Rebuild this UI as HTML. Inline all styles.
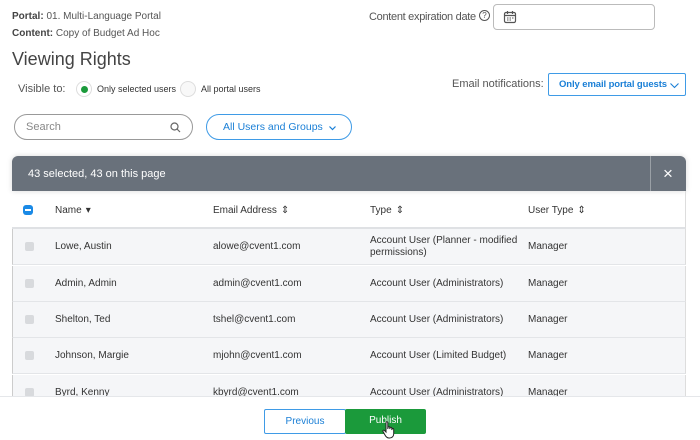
<!DOCTYPE html>
<html><head><style>
*{box-sizing:border-box;margin:0;padding:0}
body{width:700px;height:440px;overflow:hidden;background:#fff;font-family:"Liberation Sans",sans-serif;color:#333;position:relative}
.a{position:absolute;white-space:nowrap}
.sm{font-size:10px;color:#555}
.sm b{font-weight:bold;color:#444}
.row{position:absolute;left:12px;width:674px;height:36px;background:#f5f6f8;border-bottom:1px solid #e3e5e8;border-left:1px solid #ccc;border-right:1px solid #ddd;font-size:10px;color:#333}
.row span{position:absolute;white-space:nowrap}
.cb{position:absolute;left:12px;top:13px;width:9px;height:9px;border-radius:2px;background:#d8dadd}
.hd span{position:absolute;font-size:10px;color:#333;white-space:nowrap}
.srt{font-size:9px;color:#777;margin-left:4px}
</style></head><body>
<div class="a sm" style="left:12px;top:11px"><b>Portal:</b> 01. Multi-Language Portal</div>
<div class="a sm" style="left:12px;top:28px"><b>Content:</b> Copy of Budget Ad Hoc</div>
<div class="a" style="left:12px;top:49px;font-size:18px;color:#444">Viewing Rights</div>
<div class="a" style="left:18px;top:83px;font-size:11px;color:#555">Visible to:</div>
<div class="a" style="left:76px;top:81px;width:16px;height:16px;border-radius:50%;border:1px solid #ddd;background:#fff"><div style="position:absolute;left:4px;top:4px;width:7px;height:7px;border-radius:50%;background:#1b9a3b"></div></div>
<div class="a" style="left:97px;top:84px;font-size:9px;color:#333">Only selected users</div>
<div class="a" style="left:180px;top:81px;width:16px;height:16px;border-radius:50%;border:1px solid #ddd;background:#f8f8f8"></div>
<div class="a" style="left:201px;top:84px;font-size:9px;color:#333">All portal users</div>
<div class="a" style="left:369px;top:11px;font-size:11px;color:#555;letter-spacing:-0.3px">Content expiration date</div>
<div class="a" style="left:479px;top:10px;width:11px;height:11px;border:1px solid #555;border-radius:50%;font-size:8px;line-height:9px;text-align:center;color:#555">?</div>
<div class="a" style="left:493px;top:4px;width:162px;height:26px;border:1px solid #bbb;border-radius:4px">
<svg class="a" style="left:9px;top:5px" width="14" height="14" viewBox="0 0 14 14" fill="none" stroke="#555" stroke-width="1.2"><rect x="1.5" y="2.5" width="11" height="10" rx="1.5"/><path d="M1.5 5.5h11M4.5 1v3M9.5 1v3"/><path d="M4 8h1.5M6.5 8h1.5M9 8h1.5M4 10h1.5M6.5 10h1.5" stroke-width="1"/></svg></div>
<div class="a" style="left:452px;top:78px;font-size:11px;color:#555">Email notifications:</div>
<div class="a" style="left:548px;top:73px;width:138px;height:23px;border:1px solid #3f9be6;border-radius:2px;font-size:9.5px;font-weight:bold;color:#1a7fd6;padding:5px 0 0 10px;letter-spacing:-0.1px">Only email portal guests
<svg class="a" style="left:121px;top:9px" width="9" height="6" viewBox="0 0 9 6" fill="none" stroke="#1a7fd6" stroke-width="1.1"><path d="M.5 .5l4 4 4-4"/></svg></div>
<div class="a" style="left:14px;top:114px;width:179px;height:26px;border:1px solid #999;border-radius:13px;font-size:11px;color:#888;padding:6px 0 0 11px">Search
<svg class="a" style="left:155px;top:7px" width="11" height="11" viewBox="0 0 11 11" fill="none" stroke="#666" stroke-width="1.2"><circle cx="4.5" cy="4.5" r="3.5"/><path d="M7 7l3 3"/></svg></div>
<div class="a" style="left:206px;top:114px;width:146px;height:26px;border:1px solid #3f9be6;border-radius:13px;font-size:10.5px;color:#1a7fd6;padding:6px 0 0 16px">All Users and Groups
<svg class="a" style="left:122px;top:11px" width="7" height="5" viewBox="0 0 7 5" fill="none" stroke="#1a7fd6" stroke-width="1.2"><path d="M.5 .5l3 3 3-3"/></svg></div>
<div class="a" style="left:12px;top:156px;width:674px;height:35px;background:#69717b;border-radius:6px 6px 0 0;box-shadow:0 0 6px rgba(0,0,0,.15);color:#fff;font-size:11px;padding:12px 0 0 16px">43 selected, 43 on this page
<div class="a" style="left:638px;top:0;width:1px;height:35px;background:#9aa0a6"></div>
<div class="a" style="left:651px;top:8px;font-size:17px">&#215;</div></div>
<div class="a hd" style="left:12px;top:191px;width:674px;height:38px;border-bottom:2px solid #dfe1e4;border-right:1px solid #ddd">
<div class="a" style="left:11px;top:14px;width:10px;height:10px;border-radius:3px;background:#1a8ae6"><div style="position:absolute;left:2px;top:4px;width:6px;height:2px;background:#fff"></div></div>
<span style="left:43px;top:14px">Name<span class="srt">&#9662;</span></span>
<span style="left:201px;top:14px">Email Address<span class="srt">&#8661;</span></span>
<span style="left:358px;top:14px">Type<span class="srt">&#8661;</span></span>
<span style="left:516px;top:14px">User Type<span class="srt">&#8661;</span></span></div>
<div class="row" style="top:229px"><div class="cb"></div><span style="left:42px;top:12px">Lowe, Austin</span><span style="left:200px;top:12px">alowe@cvent1.com</span><span style="left:357px;top:6px;line-height:12px">Account User (Planner - modified<br>permissions)</span><span style="left:515px;top:12px">Manager</span></div>
<div class="row" style="top:266px"><div class="cb"></div><span style="left:42px;top:12px">Admin, Admin</span><span style="left:200px;top:12px">admin@cvent1.com</span><span style="left:357px;top:12px">Account User (Administrators)</span><span style="left:515px;top:12px">Manager</span></div>
<div class="row" style="top:302px"><div class="cb"></div><span style="left:42px;top:12px">Shelton, Ted</span><span style="left:200px;top:12px">tshel@cvent1.com</span><span style="left:357px;top:12px">Account User (Administrators)</span><span style="left:515px;top:12px">Manager</span></div>
<div class="row" style="top:338px"><div class="cb"></div><span style="left:42px;top:12px">Johnson, Margie</span><span style="left:200px;top:12px">mjohn@cvent1.com</span><span style="left:357px;top:12px">Account User (Limited Budget)</span><span style="left:515px;top:12px">Manager</span></div>
<div class="row" style="top:375px"><div class="cb"></div><span style="left:42px;top:12px">Byrd, Kenny</span><span style="left:200px;top:12px">kbyrd@cvent1.com</span><span style="left:357px;top:12px">Account User (Administrators)</span><span style="left:515px;top:12px">Manager</span></div>
<div class="a" style="left:0;top:396px;width:700px;height:44px;background:#fff;border-top:1px solid #e5e7ea"></div>
<div class="a" style="left:264px;top:409px;width:82px;height:25px;border:1px solid #3f9be6;border-radius:2px;font-size:10px;color:#1a7fd6;text-align:center;line-height:23px">Previous</div>
<div class="a" style="left:345px;top:409px;width:81px;height:25px;background:#1b9a3b;border-radius:2px;font-size:10px;color:#fff;text-align:center;line-height:24px">Publish</div>
<svg class="a" style="left:382px;top:421px" width="14" height="18" viewBox="0 0 14 18"><path d="M4 1.5c0-1 1.8-1 1.8 0V8l.2-1.5c0-1 1.8-1 1.8 0V8l.2-1c0-1 1.8-1 1.8 0V9l.2-.8c0-1 1.7-1 1.7 0V13c0 2-1.5 4-4 4H7c-2 0-3-1-4-3L1 10.5c-.5-1 .8-1.8 1.5-1L4 11z" fill="#fff" stroke="#222" stroke-width="1"/></svg>
</body></html>
